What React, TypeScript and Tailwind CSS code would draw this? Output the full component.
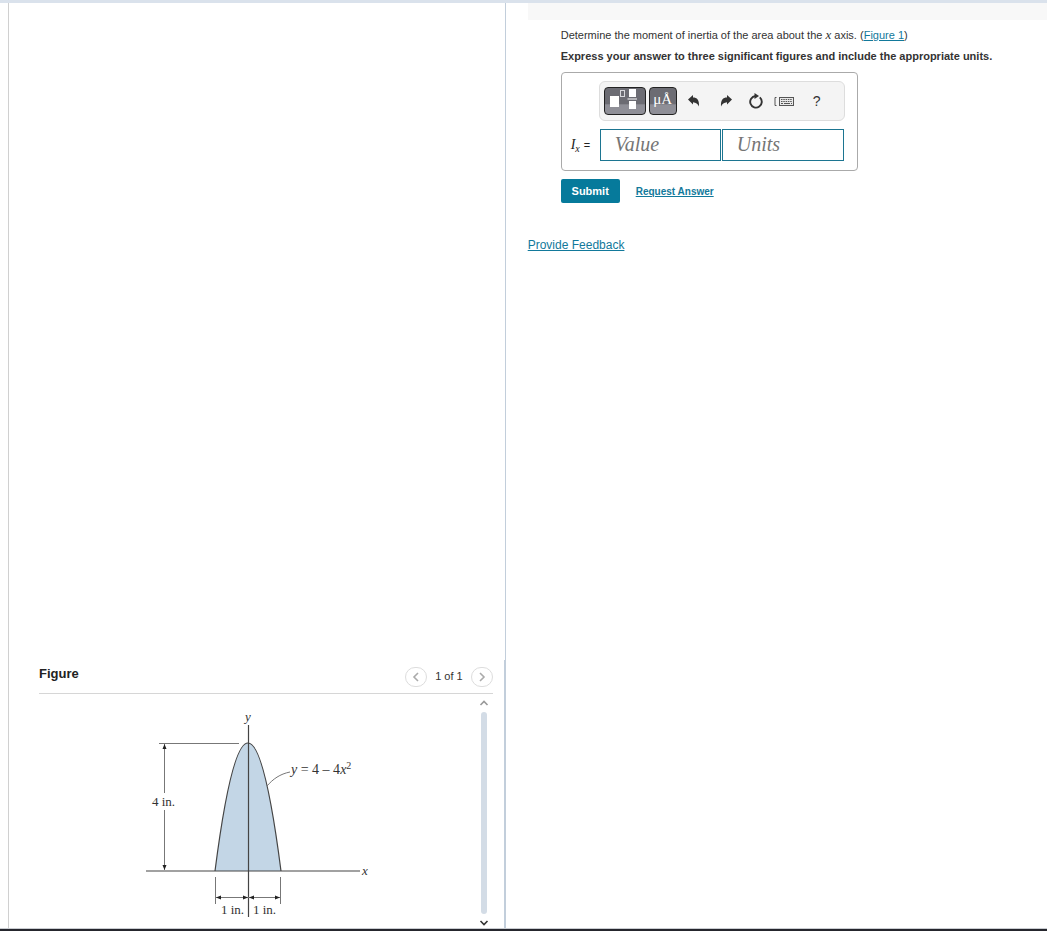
import React from 'react';

function TemplatesIcon() {
  return (
    <svg width="40" height="26" viewBox="0 0 40 26" fill="none" aria-hidden="true">
      <rect x="5" y="8" width="9" height="11" fill="#fff" />
      <rect x="15.5" y="2.500" width="4" height="6" stroke="#d8d8dc" />
      <rect x="24" y="1" width="7" height="8" fill="#fff" />
      <path d="M22.500 11H32" stroke="#e6e6e8" strokeWidth="1.200" />
      <rect x="24" y="13" width="7" height="8" fill="#fff" />
    </svg>
  );
}

function UndoIcon({ flipped = false }: { flipped?: boolean }) {
  return (
    <svg width="12" height="12" viewBox="0 0 12 12" aria-hidden="true">
      <path
        d={
          flipped
            ? 'M12 4.600 7 0v2.600C3 2.600.6 5 1 11.600 2.200 8.800 4 7.400 7 7.200v2.200z'
            : 'M0 4.600 5 0v2.600C9 2.600 11.400 5 11 11.600 9.800 8.800 8 7.400 5 7.200v2.200z'
        }
        fill="#333"
      />
    </svg>
  );
}

function ResetIcon() {
  return (
    <svg width="15" height="16" viewBox="0 0 15 16" fill="none" aria-hidden="true">
      <path d="M11.800 4.400A5.800 5.800 0 1 1 7.500 3" stroke="#333" strokeWidth="1.900" />
      <path d="M6.500 0 11 3 6.500 6z" fill="#333" />
    </svg>
  );
}

function KeyboardIcon() {
  return (
    <svg width="21" height="11" viewBox="0 0 21 11" fill="none" aria-hidden="true">
      <path d="M2.500 1.500h-1.500v8h1.500" stroke="#555" />
      <rect x="5.500" y="1.500" width="14" height="8" fill="#e8e8e8" stroke="#555" />
      <path d="M7 3.500h11M7 5.500h11" stroke="#555" strokeDasharray="1.500 .8" />
      <path d="M7 7.500h2M10 7.500h6M17 7.500h1" stroke="#555" />
    </svg>
  );
}

function Chevron({ d, className }: { d: string; className: string }) {
  return (
    <svg width="10" height="10" viewBox="0 0 10 10" fill="none" stroke="currentColor" strokeWidth="1.600" className={className} aria-hidden="true">
      <path d={d} />
    </svg>
  );
}

function ParabolaFigure() {
  return (
    <svg width="250" height="228" viewBox="0 0 250 228" role="img" aria-label="Area under a parabola" className="font-['Liberation_Serif',serif]">
      <path d="M85 171Q118 -85 151 171z" fill="#c3d6e6" />
      <path d="M85 171Q118 -85 151 171" fill="none" stroke="#444" strokeWidth="1.200" />
      <path d="M16 171H230M118.500 25V217" stroke="#444" strokeWidth="1.200" />

      {/* Dimension lines */}
      <g stroke="#777" strokeWidth="1" fill="none">
        <path d="M29 43.500H109" />
        <path d="M34.500 44V93M34.500 110V170" />
        <path d="M85.500 177V204M150.500 177V204" />
        <path d="M86 197.500H150" />
        <path d="M137 86C143 79 150 74 160 72" />
      </g>
      <g fill="#222">
        <path d="M34.500 44l2 5h-4zM34.500 170l2-5h-4z" />
        <path d="M86 197.500l5-2v4zM118 197.500l-5-2v4zM119 197.500l5-2v4zM150 197.500l-5-2v4z" />
      </g>

      <g fill="#333" fontSize="13">
        <text x="115" y="21" fontStyle="italic">y</text>
        <text x="232" y="175" fontStyle="italic">x</text>
        <text x="22" y="106">4 in.</text>
        <text x="91" y="214">1 in.</text>
        <text x="123" y="214">1 in.</text>
        <text x="161" y="74" fontSize="14">
          <tspan fontStyle="italic">y</tspan> = 4 – 4<tspan fontStyle="italic">x</tspan>
          <tspan dy="-5" fontSize="10">2</tspan>
        </text>
      </g>
    </svg>
  );
}

function FigurePanel() {
  return (
    <section className="border-r-2 border-[#c2cedb] pl-[30px] pr-2.5">
      <header className="mr-px flex h-[34px] items-center border-b border-[#d6d6d6]">
        <h2 className="mb-1.5 flex-1 text-[13px] font-bold text-[#222]">Figure</h2>
        <nav className="flex items-center gap-2 text-[11px] text-[#333]">
          <button type="button" aria-label="Previous figure" className="flex h-5 w-[22px] items-center justify-center rounded-full border border-[#ddd]">
            <Chevron d="M7 1 3 5l4 4" className="text-[#aaa]" />
          </button>
          <span>1 of 1</span>
          <button type="button" aria-label="Next figure" className="flex h-5 w-[22px] items-center justify-center rounded-full border border-[#ddd]">
            <Chevron d="M3 1l4 4-4 4" className="text-[#aaa]" />
          </button>
        </nav>
      </header>
      <div className="flex">
        <div className="flex-1 pl-[91px] pt-1.5">
          <ParabolaFigure />
        </div>
        <div className="flex w-5 flex-col items-center pt-1">
          <Chevron d="M1.500 7 5 3.500 8.500 7" className="text-[#999]" />
          <div className="my-1 w-1.5 flex-1 rounded-full bg-[#d3dce6]" />
          <Chevron d="M1.500 3 5 6.500 8.500 3" className="text-[#333]" />
        </div>
      </div>
    </section>
  );
}

function AnswerBox() {
  return (
    <div className="mt-[5px] w-[297px] rounded border border-[#aaa] pt-2 pr-3 pb-[9px] pl-[9px]">
      <div className="ml-7 flex h-10 items-center rounded-md border border-[#ddd] bg-[#f4f4f4] pl-1">
        <button type="button" aria-label="Templates" className="h-7 w-[42px] rounded border border-[#222] bg-linear-to-b from-[#6c6c73] from-60% to-[#8f8f97] to-65%">
          <TemplatesIcon />
        </button>
        <button type="button" aria-label="Symbols" className="ml-[3px] h-7 w-7 rounded border border-[#222] bg-linear-to-b from-[#6c6c73] from-60% to-[#8f8f97] to-65% pb-1 font-['Liberation_Serif',serif] text-[15px] leading-5 text-white">
          μÅ
        </button>
        <button type="button" aria-label="Undo" className="ml-[11px]">
          <UndoIcon />
        </button>
        <button type="button" aria-label="Redo" className="ml-5">
          <UndoIcon flipped />
        </button>
        <button type="button" aria-label="Reset" className="ml-4">
          <ResetIcon />
        </button>
        <button type="button" aria-label="Keyboard shortcuts" className="ml-[11px]">
          <KeyboardIcon />
        </button>
        <button type="button" aria-label="Help" className="ml-[18px] text-sm text-[#333]">
          ?
        </button>
      </div>
      <div className="mt-2 flex items-center">
        <label htmlFor="value" className="w-[29px] shrink-0 whitespace-nowrap font-['Liberation_Serif',serif] text-sm text-[#222]">
          <i>I</i>
          <sub className="text-[10px] italic">x</sub>
          <span className="ml-1 font-['Liberation_Sans',sans-serif] text-[11px]">=</span>
        </label>
        <input id="value" placeholder="Value" className="h-8 w-[121px] border border-[#1c7591] pb-0.5 pl-3.5 font-['Liberation_Serif',serif] text-xl italic placeholder:text-[#757575]" />
        <input aria-label="Units" placeholder="Units" className="ml-px h-8 w-[122px] border border-[#1c7591] pb-0.5 pl-3.5 font-['Liberation_Serif',serif] text-xl italic placeholder:text-[#757575]" />
      </div>
    </div>
  );
}

export default function App() {
  return (
    <div className="flex min-h-screen flex-col border-t-3 border-[#dae2ec] bg-white font-['Liberation_Sans',Arial,sans-serif]">
      <main className="grid flex-1 grid-cols-[48.3%_1fr]">
        <div className="ml-2 flex flex-col justify-end border-l border-[#d0d0d0] bg-linear-to-l from-[#c2cedb] from-[1px] to-white to-[1px]">
          <FigurePanel />
        </div>
        <div className="pl-[22px]">
          <div className="h-[17px] bg-[#f8f8f8]" />
          <div className="pl-[33px] pt-[5px] text-[11px] leading-[21px] text-[#333]">
            <p>
              Determine the moment of inertia of the area about the{' '}
              <i className="font-['Liberation_Serif',serif] text-[13px] leading-none">x</i> axis. (
              <a href="#figure" className="text-[#12799b] underline">Figure 1</a>)
            </p>
            <p className="font-bold">Express your answer to three significant figures and include the appropriate units.</p>
            <AnswerBox />
            <div className="mt-2 flex items-center gap-4">
              <button type="button" className="h-6 w-[59px] rounded-xs bg-[#067a9b] text-[11px] font-bold text-white">
                Submit
              </button>
              <a href="#answer" className="text-[10px] font-bold text-[#12799b] underline">Request Answer</a>
            </div>
          </div>
          <a href="#feedback" className="mt-[34px] inline-block text-xs text-[#12799b] underline">Provide Feedback</a>
        </div>
      </main>
      <div className="h-[3px] border-t border-[#c9ccd1] bg-[#25262d]" />
    </div>
  );
}
